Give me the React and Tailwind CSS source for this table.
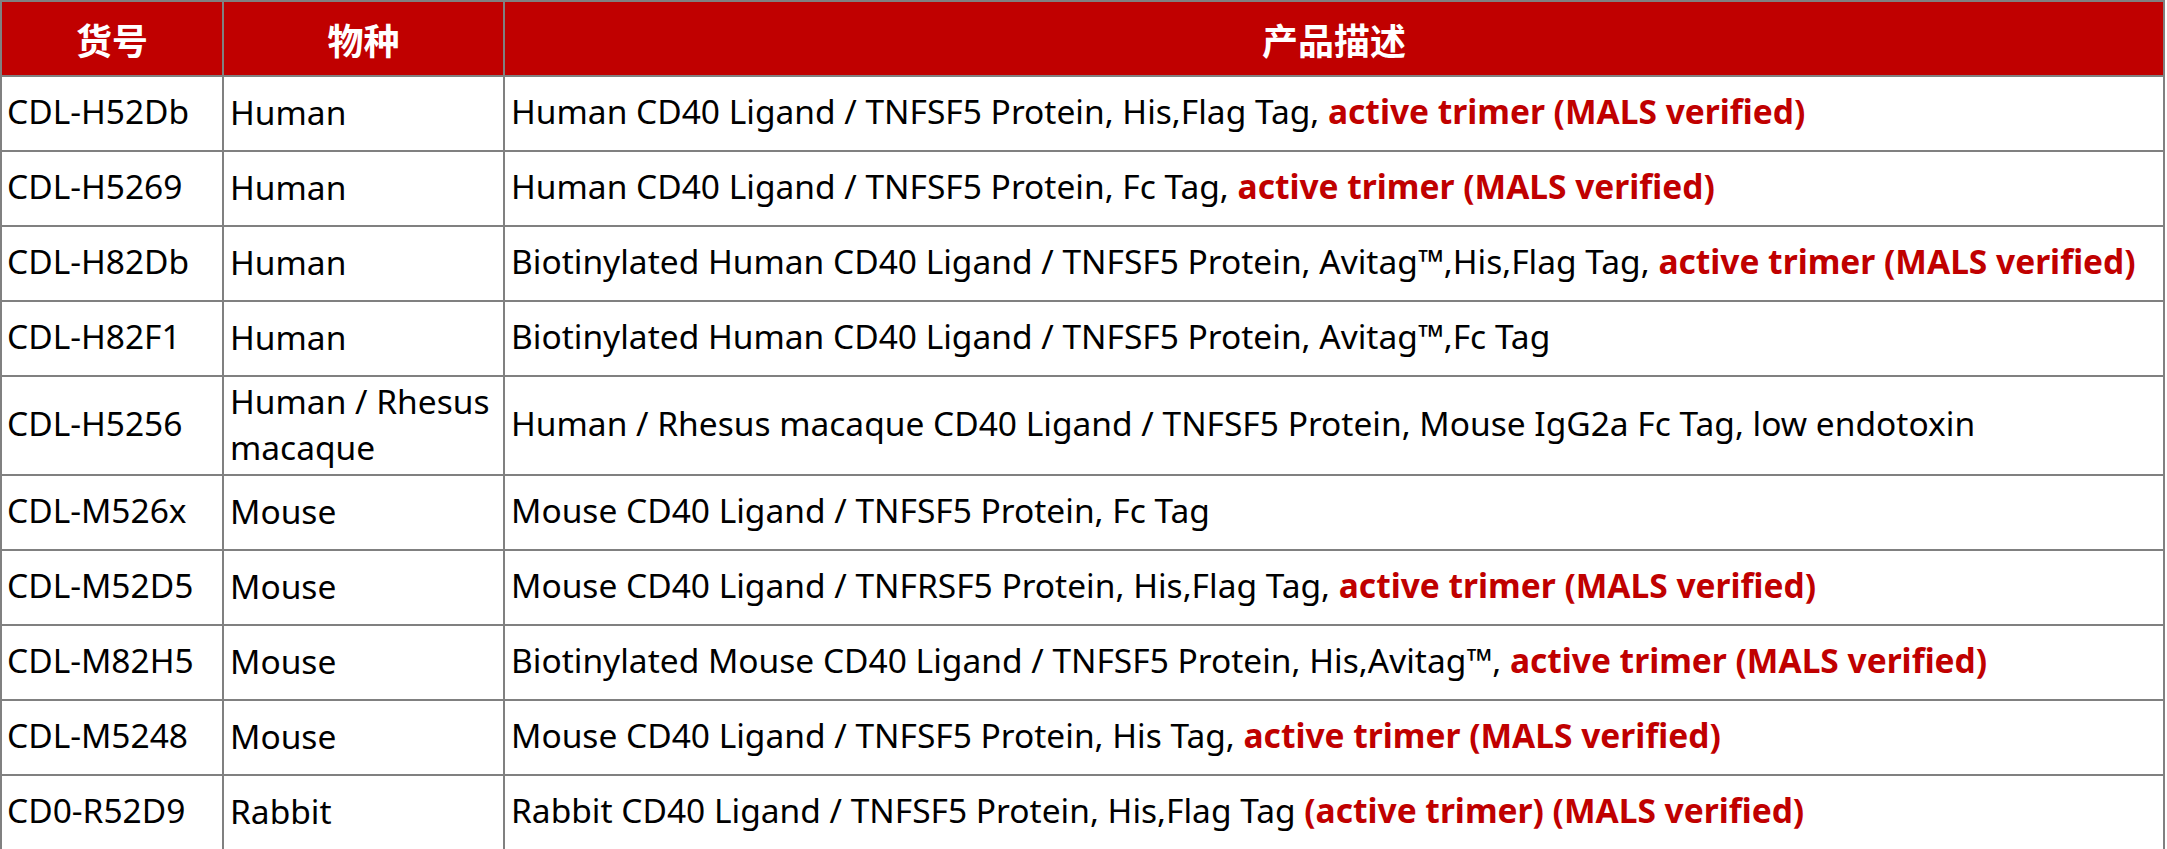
import React from "react";

const rows = [
  ["CDL-H52Db", "Human", "Human CD40 Ligand / TNFSF5 Protein, His,Flag Tag, ", "active trimer (MALS verified)"],
  ["CDL-H5269", "Human", "Human CD40 Ligand / TNFSF5 Protein, Fc Tag, ", "active trimer (MALS verified)"],
  ["CDL-H82Db", "Human", "Biotinylated Human CD40 Ligand / TNFSF5 Protein, Avitag™,His,Flag Tag, ", "active trimer (MALS verified)"],
  ["CDL-H82F1", "Human", "Biotinylated Human CD40 Ligand / TNFSF5 Protein, Avitag™,Fc Tag", ""],
  ["CDL-H5256", "Human / Rhesus macaque", "Human / Rhesus macaque CD40 Ligand / TNFSF5 Protein, Mouse IgG2a Fc Tag, low endotoxin", ""],
  ["CDL-M526x", "Mouse", "Mouse CD40 Ligand / TNFSF5 Protein, Fc Tag", ""],
  ["CDL-M52D5", "Mouse", "Mouse CD40 Ligand / TNFRSF5 Protein, His,Flag Tag, ", "active trimer (MALS verified)"],
  ["CDL-M82H5", "Mouse", "Biotinylated Mouse CD40 Ligand / TNFSF5 Protein, His,Avitag™, ", "active trimer (MALS verified)"],
  ["CDL-M5248", "Mouse", "Mouse CD40 Ligand / TNFSF5 Protein, His Tag, ", "active trimer (MALS verified)"],
  ["CD0-R52D9", "Rabbit", "Rabbit CD40 Ligand / TNFSF5 Protein, His,Flag Tag ", "(active trimer) (MALS verified)"],
];

export default function App() {
  return (
    <div className="bg-white w-[2167px] h-[849px] overflow-hidden">
      <table
        className="border-collapse w-[2165px] table-fixed text-black text-[33.5px]"
        style={{ fontFamily: '"Noto Sans", "Noto Sans CJK SC", sans-serif' }}
      >
        <colgroup>
          <col className="w-[222px]" />
          <col className="w-[281px]" />
          <col />
        </colgroup>
        <thead>
          <tr className="bg-[#c00000] text-white">
            {["货号", "物种", "产品描述"].map((h) => (
              <th
                key={h}
                className="border-2 border-[#808080] h-[75px] p-0 text-center align-middle font-bold text-[36px] leading-none"
                style={{ fontFamily: '"Noto Sans CJK SC", sans-serif' }}
              >
                {h}
              </th>
            ))}
          </tr>
        </thead>
        <tbody>
          {rows.map((r) => {
            const tall = r[1].includes("/");
            const h = tall ? "h-[99px]" : "h-[75px]";
            return (
              <tr key={r[0]}>
                <td className={`border-2 border-[#808080] ${h} pl-[5px] pr-0 pb-[4px] align-middle whitespace-nowrap leading-none`}>
                  {r[0]}
                </td>
                <td className={`border-2 border-[#808080] ${h} pl-[6px] pr-0 pb-[4px] align-middle leading-[46px]`}>
                  {r[1]}
                </td>
                <td className={`border-2 border-[#808080] ${h} pl-[6px] pr-1 pb-[4px] align-middle whitespace-nowrap leading-none`}>
                  {r[2]}
                  {r[3] && <span className="font-bold text-[#c00000]">{r[3]}</span>}
                </td>
              </tr>
            );
          })}
        </tbody>
      </table>
    </div>
  );
}
